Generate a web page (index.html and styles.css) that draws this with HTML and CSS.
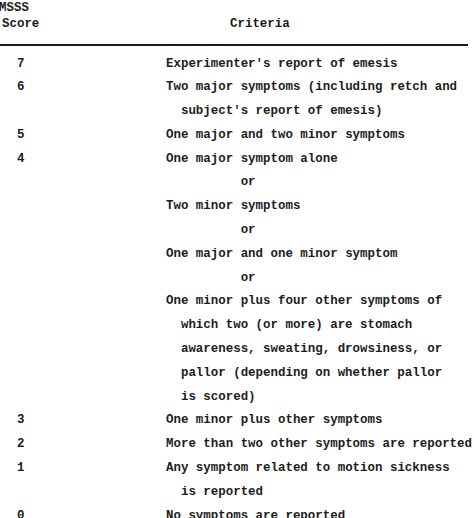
FILE: index.html
```html
<!DOCTYPE html>
<html>
<head>
<meta charset="utf-8">
<link rel="stylesheet" href="styles.css">
</head>
<body>
<div class="table">
  <div class="head">
    <div class="hscore"><div class="h1">MSSS</div><div class="h2">Score</div></div>
    <div class="hcrit">Criteria</div>
  </div>
  <div class="rule"></div>
  <div class="row"><div class="score">7</div><div class="crit"><div>Experimenter's report of emesis</div></div></div>
  <div class="row"><div class="score">6</div><div class="crit"><div>Two major symptoms (including retch and</div><div class="cont">subject's report of emesis)</div></div></div>
  <div class="row"><div class="score">5</div><div class="crit"><div>One major and two minor symptoms</div></div></div>
  <div class="row"><div class="score">4</div><div class="crit">
    <div>One major symptom alone</div>
    <div class="or">or</div>
    <div>Two minor symptoms</div>
    <div class="or">or</div>
    <div>One major and one minor symptom</div>
    <div class="or">or</div>
    <div>One minor plus four other symptoms of</div>
    <div class="cont">which two (or more) are stomach</div>
    <div class="cont">awareness, sweating, drowsiness, or</div>
    <div class="cont">pallor (depending on whether pallor</div>
    <div class="cont">is scored)</div>
  </div></div>
  <div class="row"><div class="score">3</div><div class="crit"><div>One minor plus other symptoms</div></div></div>
  <div class="row"><div class="score">2</div><div class="crit"><div>More than two other symptoms are reported</div></div></div>
  <div class="row"><div class="score">1</div><div class="crit"><div>Any symptom related to motion sickness</div><div class="cont">is reported</div></div></div>
  <div class="row"><div class="score">0</div><div class="crit"><div>No symptoms are reported</div></div></div>
</div>
</body>
</html>
```
FILE: styles.css
```css
html, body {
  margin: 0;
  padding: 0;
  background: #ffffff;
}
body {
  width: 474px;
  height: 518px;
  overflow: hidden;
  font-family: "Liberation Mono", "DejaVu Sans Mono", monospace;
  font-size: 12.45px;
  font-weight: bold;
  color: #1c1c1c;
}
.table {
  display: flex;
  flex-direction: column;
}
.head {
  display: flex;
  align-items: flex-end;
  line-height: 16px;
  height: 32px;
}
.hscore {
  width: 230px;
  flex: none;
}
.h1 {
  margin-left: -1px;
}
.h2 {
  margin-left: 2px;
}
.hcrit {
  flex: 1;
}
.rule {
  margin-top: 12px;
  height: 2px;
  width: 468px;
  background: #1a1a1a;
}
.row {
  display: flex;
  line-height: 23.8px;
}
.rule + .row {
  margin-top: 6.5px;
}
.score {
  width: 149px;
  padding-left: 17px;
  flex: none;
}
.crit {
  flex: 1;
  white-space: nowrap;
}
.cont {
  padding-left: 2ch;
}
.or {
  padding-left: 10ch;
}
```
